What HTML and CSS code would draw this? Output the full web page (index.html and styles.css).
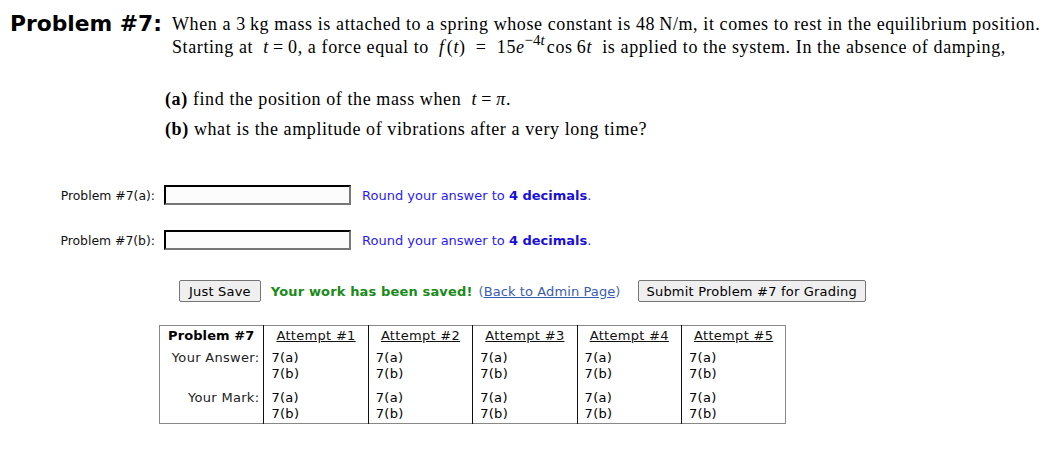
FILE: index.html
```html
<!DOCTYPE html>
<html>
<head>
<meta charset="utf-8">
<link rel="stylesheet" href="styles.css">
</head>
<body>
<div class="problem">
  <div class="ptitle">Problem #7:</div>
  <div class="ptext">
    <div class="line">When a 3&#8201;kg mass is attached to a spring whose constant is 48&#8201;N/m, it comes to rest in the equilibrium position.</div>
    <div class="line">Starting at &nbsp;<i>t</i>&#8201;=&#8201;0, a force equal to &nbsp;<i>f</i>&#8202;(<i>t</i>) &nbsp;= &nbsp;15<i>e</i><sup>&minus;4<i>t</i></sup>&#8202;cos&#8201;6<i>t</i> &nbsp;is applied to the system. In the absence of damping,</div>
  </div>
</div>
<div class="questions">
  <div class="q"><b>(a)</b> find the position of the mass when &nbsp;<i>t</i>&#8201;=&#8201;<i>&pi;</i>.</div>
  <div class="q"><b>(b)</b> what is the amplitude of vibrations after a very long time?</div>
</div>
<div class="answers">
  <div class="alabel">Problem #7(a):</div>
  <input class="ainput" type="text">
  <div class="ahint">Round your answer to <b>4 decimals</b>.</div>
  <div class="alabel">Problem #7(b):</div>
  <input class="ainput" type="text">
  <div class="ahint">Round your answer to <b>4 decimals</b>.</div>
</div>
<div class="actions">
  <button class="btn">Just Save</button>
  <span class="saved">Your work has been saved!</span>
  <span class="back">(<a href="#">Back to Admin Page</a>)</span>
  <button class="btn submit">Submit Problem #7 for Grading</button>
</div>
<table class="attempts">
  <tr class="head">
    <th class="rowh">Problem #7</th>
    <th><u>Attempt #1</u></th>
    <th><u>Attempt #2</u></th>
    <th><u>Attempt #3</u></th>
    <th><u>Attempt #4</u></th>
    <th><u>Attempt #5</u></th>
  </tr>
  <tr class="ans">
    <td class="rowl">Your Answer:</td>
    <td>7(a)<br>7(b)</td>
    <td>7(a)<br>7(b)</td>
    <td>7(a)<br>7(b)</td>
    <td>7(a)<br>7(b)</td>
    <td>7(a)<br>7(b)</td>
  </tr>
  <tr class="mark">
    <td class="rowl">Your Mark:</td>
    <td>7(a)<br>7(b)</td>
    <td>7(a)<br>7(b)</td>
    <td>7(a)<br>7(b)</td>
    <td>7(a)<br>7(b)</td>
    <td>7(a)<br>7(b)</td>
  </tr>
</table>
</body>
</html>
```
FILE: styles.css
```css
body {
  margin: 0;
  background: #fff;
  color: #000;
  font-family: "DejaVu Sans", Verdana, sans-serif;
}
.problem {
  display: flex;
  align-items: flex-start;
  padding: 11px 0 0 10px;
}
.ptitle {
  font-weight: bold;
  font-size: 21.8px;
  line-height: 26px;
  width: 162px;
  flex: none;
}
.ptext {
  font-family: "Liberation Serif", "Times New Roman", serif;
  font-size: 18px;
  letter-spacing: 0.6px;
  line-height: 23px;
  padding-top: 2px;
}
.ptext sup {
  font-size: 15px;
  line-height: 0;
  vertical-align: 8px;
  letter-spacing: 0;
}
.questions {
  font-family: "Liberation Serif", "Times New Roman", serif;
  font-size: 18px;
  letter-spacing: 0.6px;
  padding-left: 165px;
  margin-top: 25px;
}
.q {
  line-height: 30px;
}
.answers {
  display: grid;
  grid-template-columns: 155px 187px auto;
  column-gap: 10px;
  row-gap: 25px;
  align-items: center;
  margin-top: 41px;
  font-size: 12.4px;
}
.alabel {
  text-align: right;
  color: #111;
}
.ainput {
  width: 187px;
  height: 20px;
  box-sizing: border-box;
  margin: 0 0 0 -1px;
  border: 2px inset #767676;
  border-top-color: #222;
  border-left-color: #222;
  border-right-color: #777;
  border-bottom-color: #777;
  background: #fcfcfc;
  padding: 0;
}
.ahint {
  color: #2b1bf0;
  font-size: 13px;
}
.ahint b {
  color: #1a0fd8;
}
.actions {
  display: flex;
  align-items: center;
  margin: 30px 0 0 179px;
  font-size: 13px;
  height: 22px;
}
.btn {
  font-family: "DejaVu Sans", Verdana, sans-serif;
  font-size: 13px;
  letter-spacing: 0.2px;
  background: #efefef;
  border: 1px solid #767676;
  border-radius: 2px;
  height: 22px;
  padding: 0 9px;
  color: #000;
}
.saved {
  color: #1a8a1a;
  font-weight: bold;
  margin-left: 10px;
  letter-spacing: 0.15px;
}
.back {
  color: #4a6ab0;
  margin-left: 6px;
  letter-spacing: 0.1px;
}
.back a {
  color: #3a5cb0;
}
.submit {
  margin-left: 17px;
  padding: 0 8px;
}
.attempts {
  border-collapse: collapse;
  border: 1px solid #888;
  margin: 23px 0 0 159px;
  font-size: 13px;
  letter-spacing: 0.3px;
}
.attempts th, .attempts td {
  border-left: 1px solid #111;
  width: 104.4px;
  box-sizing: border-box;
  padding: 0 0 0 7px;
  vertical-align: top;
  line-height: 16px;
}
.attempts th {
  font-weight: normal;
  text-align: center;
  padding: 2px 0 0;
  height: 20px;
}
.attempts th u { color: #111; }
.attempts th.rowh {
  font-weight: bold;
  text-align: left;
  padding-left: 8px;
  border-left: none;
  letter-spacing: 0.1px;
}
.attempts td.rowl {
  text-align: right;
  padding: 0 4px 0 0;
  border-left: none;
  color: #222;
}
.attempts tr.ans td { padding-top: 4px; padding-bottom: 8px; }
.attempts tr.mark td { padding-bottom: 1px; }
```
